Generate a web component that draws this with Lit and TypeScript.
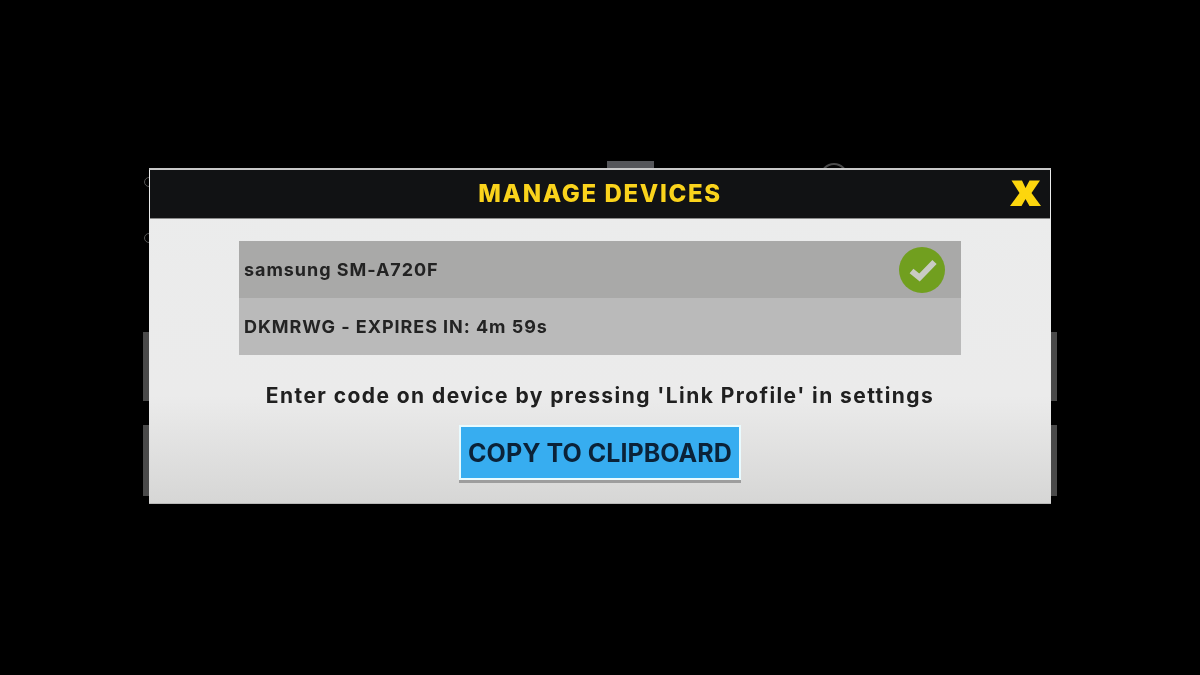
import { LitElement, html, css } from "lit";
import { customElement } from "lit/decorators.js";

@customElement("app-root")
export class AppRoot extends LitElement {
  static styles = css`
    :host {
      display: block;
      width: 1200px;
      height: 675px;
      background: #000;
      overflow: hidden;
      font-family: "Inter", "Liberation Sans", sans-serif;
    }
    .stage {
      height: 100%;
      box-sizing: border-box;
      padding-top: 168px;
      display: flex;
      flex-direction: column;
      align-items: center;
      isolation: isolate;
      filter: blur(0.45px);
    }
    .modal {
      position: relative;
      width: 902px;
      height: 335.5px;
      box-sizing: border-box;
      padding: 2px 1px 0;
      background: linear-gradient(180deg, #ebecec 0%, #ebebeb 68%, #d6d6d5 100%);
      box-shadow: inset 0 2px 0 #c9c9c9, inset 0 -1px 0 #b8b8b8;
      display: flex;
      flex-direction: column;
      align-items: center;
    }
    .ghost {
      position: absolute;
      z-index: -1;
      background: #4a4a4a;
    }
    .g-top { left: 458px; top: -7px; width: 47px; height: 7px; background: #55565a; }
    .g-arc {
      left: 671px; top: -5px; width: 24px; height: 24px;
      background: none; border: 2px solid #4a4a4a; border-radius: 50%;
    }
    .g-l1 { left: -6px; top: 164px; width: 6px; height: 69px; }
    .g-l2 { left: -6px; top: 257px; width: 6px; height: 71px; }
    .g-r1 { right: -6px; top: 164px; width: 6px; height: 69px; }
    .g-r2 { right: -6px; top: 257px; width: 6px; height: 71px; }
    .g-c1, .g-c2 {
      left: -5px; width: 8px; height: 8px;
      background: none; border: 1.5px solid #555; border-radius: 50%;
    }
    .g-c1 { top: 9px; }
    .g-c2 { top: 65px; }
    .header {
      align-self: stretch;
      height: 49px;
      flex: none;
      background: #111214;
      border-bottom: 1px solid #8b8b8b;
      box-sizing: border-box;
      padding-bottom: 1px;
      display: flex;
      align-items: center;
      justify-content: center;
      position: relative;
    }
    .title {
      color: #fad31c;
      font-size: 24px;
      font-weight: 800;
      letter-spacing: 1.65px;
      line-height: 1;
      white-space: nowrap;
    }
    .close {
      position: absolute;
      right: 9px;
      top: 10px;
      width: 31px;
      height: 27px;
    }
    .list {
      margin-top: 22px;
      width: 722px;
      flex: none;
    }
    .row {
      height: 57px;
      box-sizing: border-box;
      padding: 0 16px 0 5px;
      display: flex;
      align-items: center;
      justify-content: space-between;
      color: #232323;
      font-size: 18px;
      font-weight: 700;
      letter-spacing: 0.95px;
      white-space: nowrap;
    }
    .r1 { background: #a9a9a8; }
    .r2 { background: #bababa; }
    .check { width: 46px; height: 46px; flex: none; }
    .hint {
      margin-top: 28px;
      color: #202020;
      font-size: 21px;
      font-weight: 700;
      letter-spacing: 1.42px;
      line-height: 25px;
      white-space: nowrap;
    }
    .copy {
      margin-top: 17px;
      width: 282px;
      height: 55px;
      box-sizing: border-box;
      background: #37adf0;
      border: 2px solid #e9fbff;
      box-shadow: 0 3px 0 0 #9d9d9d;
      color: #0b2238;
      font: inherit;
      font-size: 25px;
      font-weight: 700;
      letter-spacing: 0.05px;
      white-space: nowrap;
      padding: 0;
      display: flex;
      align-items: center;
      justify-content: center;
    }
  `;

  render() {
    return html`
      <div class="stage">
        <div class="modal">
          <div class="ghost g-top"></div>
          <div class="ghost g-arc"></div>
          <div class="ghost g-l1"></div>
          <div class="ghost g-l2"></div>
          <div class="ghost g-r1"></div>
          <div class="ghost g-r2"></div>
          <div class="ghost g-c1"></div>
          <div class="ghost g-c2"></div>
          <div class="header">
            <span class="title">MANAGE DEVICES</span>
            <svg class="close" viewBox="0 0 31 27" aria-label="Close">
              <path fill="#fcd60e" d="M1.5 0.5H12L15.5 8L19.5 0.5H30L21.5 13L31 26H19.5L15.5 19L11.5 26H0L9.5 13Z"/>
            </svg>
          </div>
          <div class="list">
            <div class="row r1">
              <span>samsung SM-A720F</span>
              <svg class="check" viewBox="0 0 46 46">
                <circle cx="23" cy="23" r="23" fill="#719f1f"/>
                <path fill="none" stroke="#c9cbc4" stroke-width="6" d="M12.5 24L20.5 30.5L35.5 15"/>
              </svg>
            </div>
            <div class="row r2"><span>DKMRWG - EXPIRES IN: 4m 59s</span></div>
          </div>
          <div class="hint">Enter code on device by pressing 'Link Profile' in settings</div>
          <button class="copy">COPY TO CLIPBOARD</button>
        </div>
      </div>
    `;
  }
}
